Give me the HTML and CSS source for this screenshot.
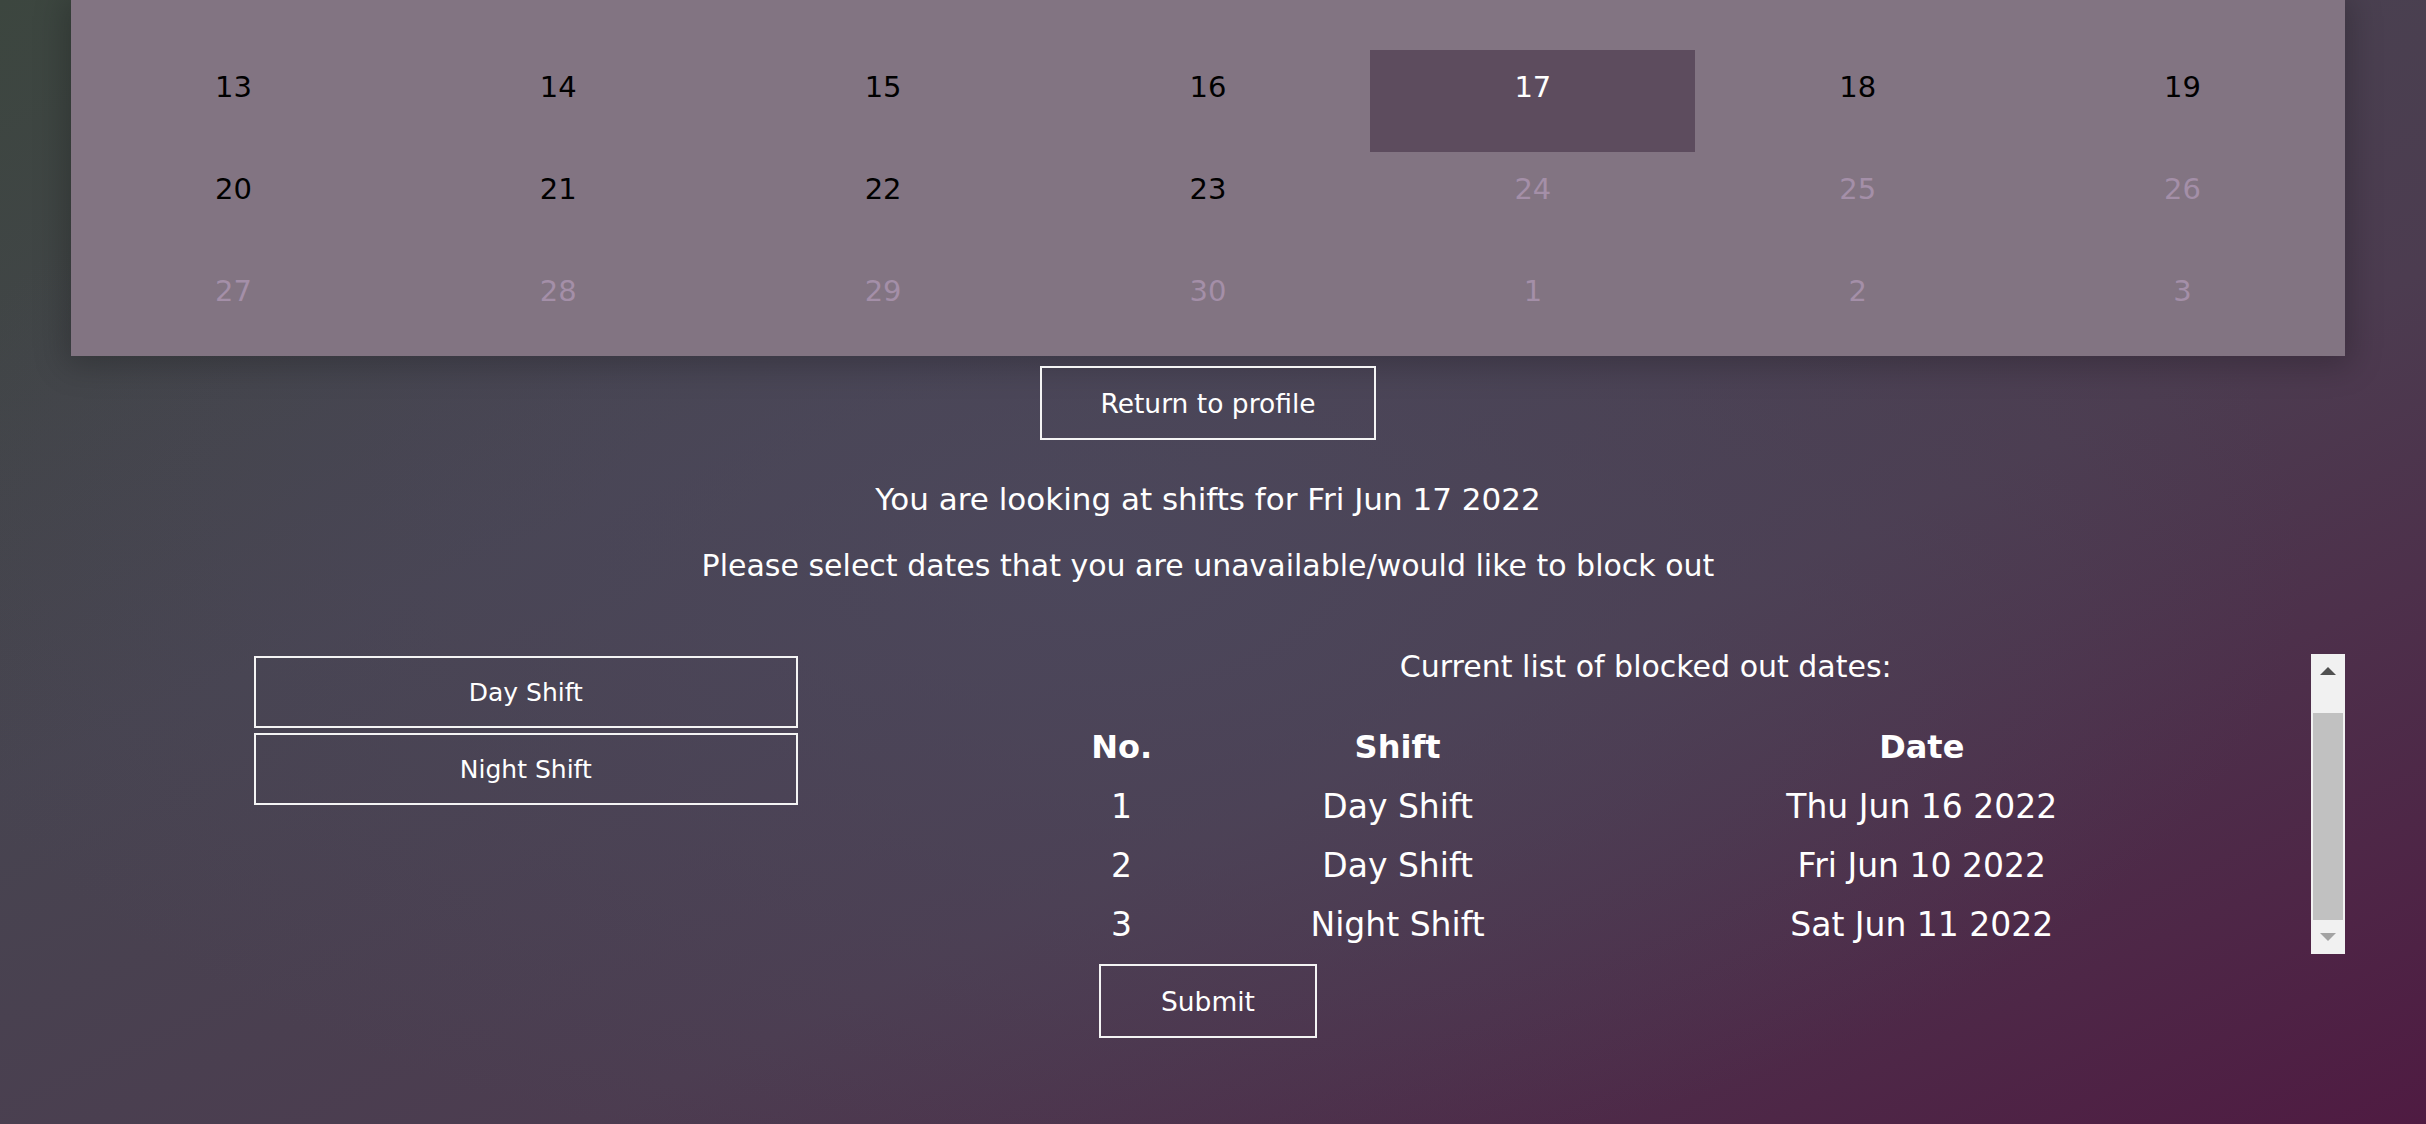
FILE: index.html
```html
<!DOCTYPE html>
<html lang="en">
<head>
<meta charset="utf-8">
<title>Block out dates</title>
<link rel="stylesheet" href="styles.css">
</head>
<body>
<div class="page">
  <div class="calendar">
    <div class="cal-grid">
      <div class="day">13</div>
      <div class="day">14</div>
      <div class="day">15</div>
      <div class="day">16</div>
      <div class="day day--selected">17</div>
      <div class="day">18</div>
      <div class="day">19</div>
      <div class="day">20</div>
      <div class="day">21</div>
      <div class="day">22</div>
      <div class="day">23</div>
      <div class="day day--muted">24</div>
      <div class="day day--muted">25</div>
      <div class="day day--muted">26</div>
      <div class="day day--muted">27</div>
      <div class="day day--muted">28</div>
      <div class="day day--muted">29</div>
      <div class="day day--muted">30</div>
      <div class="day day--muted">1</div>
      <div class="day day--muted">2</div>
      <div class="day day--muted">3</div>
    </div>
  </div>

  <div class="center-wrap">
    <button class="btn btn-return" type="button">Return to profile</button>
  </div>

  <p class="info info--first">You are looking at shifts for Fri Jun 17 2022</p>
  <p class="info info--second">Please select dates that you are unavailable/would like to block out</p>

  <div class="shift-row">
    <div class="shift-options">
      <button class="btn btn-shift" type="button">Day Shift</button>
      <button class="btn btn-shift btn-shift--second" type="button">Night Shift</button>
    </div>
    <div class="blocked">
      <div class="blocked-main">
        <p class="blocked-title">Current list of blocked out dates:</p>
        <table class="blocked-table">
          <colgroup>
            <col class="col-no">
            <col class="col-shift">
            <col class="col-date">
          </colgroup>
          <thead>
            <tr><th>No.</th><th>Shift</th><th>Date</th></tr>
          </thead>
          <tbody>
            <tr><td>1</td><td>Day Shift</td><td>Thu Jun 16 2022</td></tr>
            <tr><td>2</td><td>Day Shift</td><td>Fri Jun 10 2022</td></tr>
            <tr><td>3</td><td>Night Shift</td><td>Sat Jun 11 2022</td></tr>
          </tbody>
        </table>
      </div>
      <div class="scrollbar" aria-hidden="true">
        <div class="sb-btn"><span class="sb-arrow sb-arrow--up"></span></div>
        <div class="sb-track"><div class="sb-thumb"></div></div>
        <div class="sb-btn"><span class="sb-arrow sb-arrow--down"></span></div>
      </div>
    </div>
  </div>

  <div class="center-wrap">
    <button class="btn btn-submit" type="button">Submit</button>
  </div>
</div>
</body>
</html>
```

FILE: styles.css
```css
html {
  min-height: 100%;
  background-color: #4a4456;
  background-image:
    radial-gradient(ellipse 50% 55% at 45% 50%, rgba(76, 72, 93, 0.85), rgba(76, 72, 93, 0) 100%),
    linear-gradient(to bottom right, #3c463f 0%, #474450 35%, #4c3c50 62%, #4f1b42 100%);
  background-repeat: no-repeat;
  background-size: 100% 100%;
}

body {
  margin: 0;
  min-height: 100vh;
  font-family: "DejaVu Sans", Verdana, sans-serif;
  color: #ffffff;
}

.page {
  padding: 0 81px 0 71px;
}

/* Calendar */
.calendar {
  background: #827482;
  padding-top: 50px;
  box-shadow: 0 4px 30px 6px rgba(0, 0, 0, 0.22);
}

.cal-grid {
  display: grid;
  grid-template-columns: repeat(7, 1fr);
  grid-auto-rows: 102px;
}

.day {
  box-sizing: border-box;
  padding-top: 20px;
  font-size: 29px;
  line-height: 34px;
  text-align: center;
  color: #000000;
}

.day--selected {
  background: #5d4c5e;
  color: #ffffff;
}

.day--muted {
  color: #a48fa8;
}

/* Buttons */
.btn {
  box-sizing: border-box;
  display: flex;
  align-items: center;
  justify-content: center;
  background: transparent;
  color: #ffffff;
  border: 2px solid #f4f4f4;
  border-radius: 0;
  font-family: "DejaVu Sans", Verdana, sans-serif;
  padding: 0;
  margin: 0;
}

.center-wrap {
  display: flex;
  justify-content: center;
  margin-top: 10px;
}

.btn-return {
  width: 336px;
  height: 74px;
  font-size: 26.5px;
}

.btn-submit {
  width: 218px;
  height: 74px;
  font-size: 26.5px;
}

/* Info text */
.info {
  margin: 0;
  font-size: 30px;
  line-height: 35px;
  text-align: center;
}

.info--first {
  margin-top: 42px;
  font-size: 31px;
}

.info--second {
  margin-top: 31px;
}

/* Shift row */
.shift-row {
  display: flex;
  align-items: flex-start;
  margin-top: 66px;
}

.shift-options {
  flex: 0 0 40%;
  display: flex;
  flex-direction: column;
  align-items: center;
  padding-top: 7px;
}

.btn-shift {
  width: 544px;
  height: 72px;
  font-size: 25px;
}

.btn-shift--second {
  margin-top: 5px;
}

.blocked {
  flex: 0 0 60%;
  min-width: 0;
  display: flex;
  align-items: flex-start;
}

.blocked-main {
  flex: 1 1 auto;
  min-width: 0;
}

.blocked-title {
  margin: 0;
  font-size: 30px;
  line-height: 35px;
  text-align: center;
}

.blocked-table {
  width: 100%;
  margin-top: 33.5px;
  border-collapse: collapse;
  table-layout: fixed;
  font-size: 33px;
}

.col-no { width: 282px; }
.col-shift { width: 270px; }
.col-date { width: auto; }

.blocked-table th,
.blocked-table td {
  padding: 11px 0;
  line-height: 37px;
  text-align: center;
}

.blocked-table th {
  font-weight: bold;
  font-size: 32px;
}

/* Scrollbar (drawn, list is scrolled to its end) */
.scrollbar {
  flex: 0 0 34px;
  height: 300px;
  margin-top: 5px;
  display: flex;
  flex-direction: column;
  background: #f1f1f1;
}

.sb-btn {
  flex: 0 0 34px;
  display: flex;
  align-items: center;
  justify-content: center;
}

.sb-arrow {
  width: 0;
  height: 0;
  border-left: 8.5px solid transparent;
  border-right: 8.5px solid transparent;
}

.sb-arrow--up {
  border-bottom: 8px solid #505050;
}

.sb-arrow--down {
  border-top: 8px solid #a3a3a3;
}

.sb-track {
  flex: 1 1 auto;
  display: flex;
  flex-direction: column;
  justify-content: flex-end;
}

.sb-thumb {
  height: 207px;
  margin: 0 2px;
  background: #c1c1c1;
}
```
